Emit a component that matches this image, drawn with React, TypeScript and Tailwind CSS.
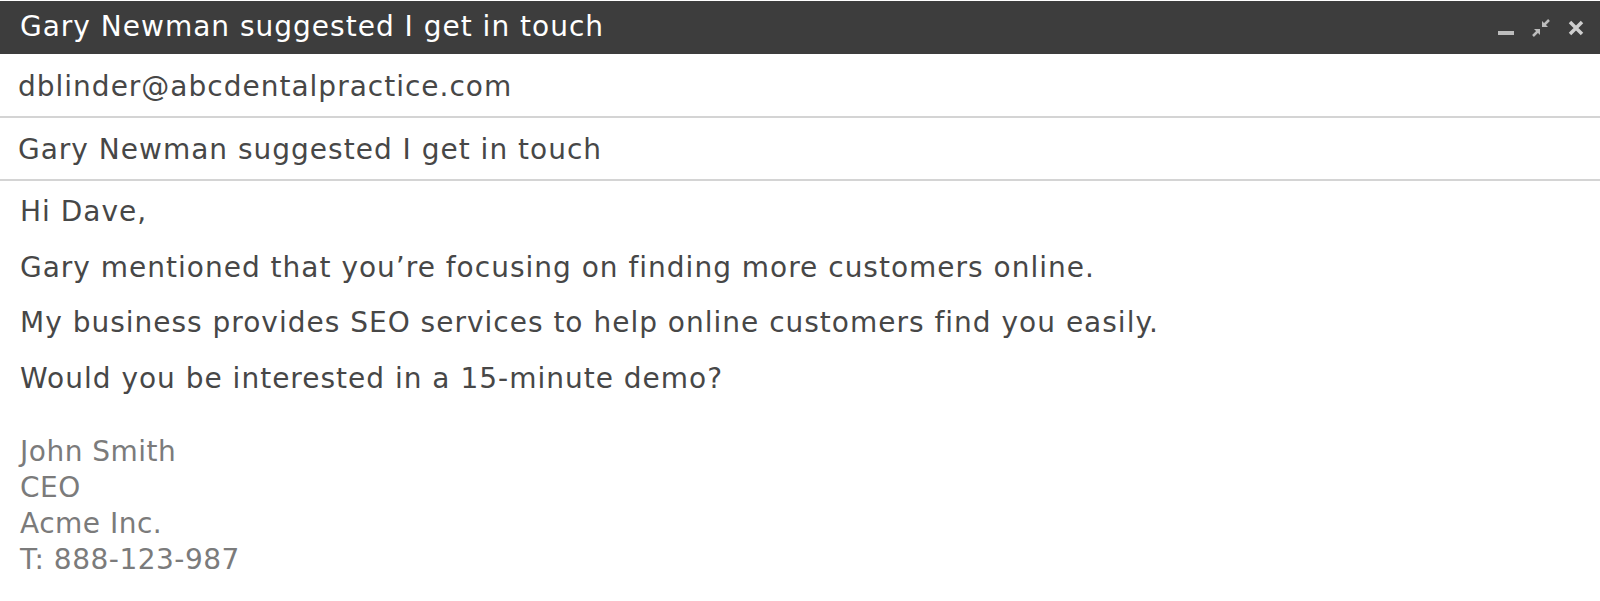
import React from 'react'

function MinimizeIcon() {
  return (
    <svg width="16" height="18" viewBox="0 0 16 18" className="text-[#bdbdbd]">
      <rect x="0" y="12" width="16" height="4" fill="currentColor" />
    </svg>
  )
}

function CompressIcon() {
  return (
    <svg width="18" height="18" viewBox="0 0 18 18" className="text-[#bdbdbd]">
      <path d="M17 1 L11 7" stroke="currentColor" strokeWidth="2.5" />
      <path d="M10 2 V8 H16 Z" fill="currentColor" />
      <path d="M1 17 L7 11" stroke="currentColor" strokeWidth="2.5" />
      <path d="M2 10 H8 V16 Z" fill="currentColor" />
    </svg>
  )
}

function CloseIcon() {
  return (
    <svg width="16" height="16" viewBox="0 0 16 16" className="text-[#cfcfcf]">
      <path d="M2 2 L14 14 M14 2 L2 14" stroke="currentColor" strokeWidth="3.5" />
    </svg>
  )
}

export default function App() {
  const body = [
    'Hi Dave,',
    'Gary mentioned that you\u2019re focusing on finding more customers online.',
    'My business provides SEO services to help online customers find you easily.',
    'Would you be interested in a 15-minute demo?',
  ]
  const signature = ['John Smith', 'CEO', 'Acme Inc.', 'T: 888-123-987']

  return (
    <div className="w-[1600px] h-[601px] bg-white overflow-hidden font-['DejaVu_Sans',sans-serif] text-[28px] tracking-[1px]">
      {/* Title bar */}
      <div className="h-[54px] bg-[#3d3d3d] border-t border-white flex items-center justify-between pl-[20px] pr-[16px]">
        <span className="text-white -mt-[2px]">Gary Newman suggested I get in touch</span>
        <div className="flex items-center gap-[18px]">
          <MinimizeIcon />
          <CompressIcon />
          <CloseIcon />
        </div>
      </div>

      {/* To */}
      <div className="h-[64px] flex items-center pl-[18px] pt-[4px] border-b-2 border-[#d4d4d4] text-[#474747]">
        dblinder@abcdentalpractice.com
      </div>

      {/* Subject */}
      <div className="h-[63px] flex items-center pl-[18px] pt-[2px] border-b-2 border-[#d4d4d4] text-[#474747]">
        Gary Newman suggested I get in touch
      </div>

      {/* Body */}
      <div className="pl-[20px] pt-[12px] text-[#474747] flex flex-col gap-[18.5px]">
        {body.map(line => (
          <div key={line} className="leading-[37px]">{line}</div>
        ))}
      </div>

      {/* Signature */}
      <div className="pl-[20px] pt-[37px] text-[#7b7b7b] tracking-[0.5px]">
        {signature.map(line => (
          <div key={line} className="leading-[36px]">{line}</div>
        ))}
      </div>
    </div>
  )
}
